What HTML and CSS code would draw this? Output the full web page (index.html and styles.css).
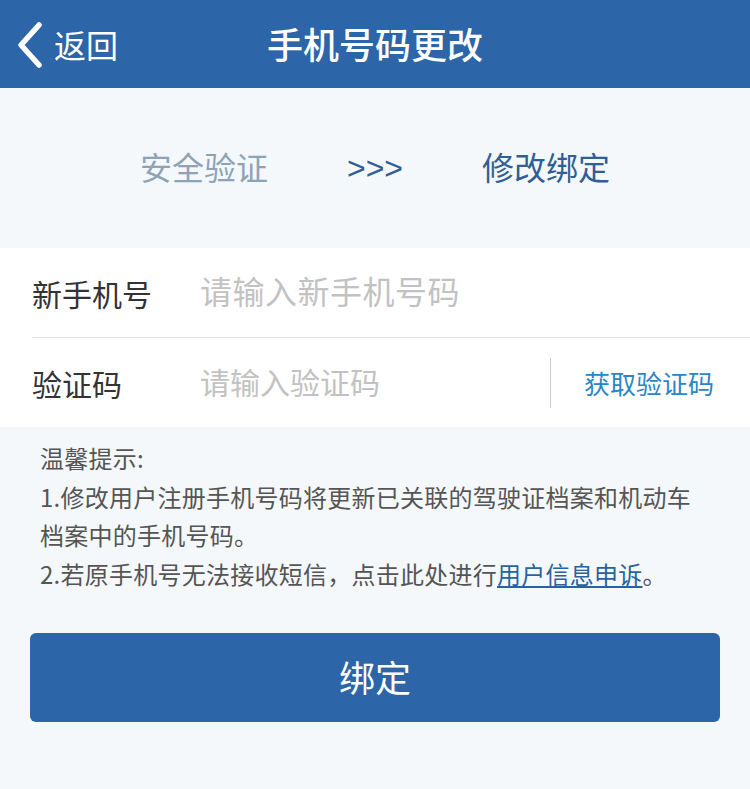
FILE: index.html
```html
<!DOCTYPE html>
<html lang="zh-CN">
<head>
<meta charset="utf-8">
<title>手机号码更改</title>
<link rel="stylesheet" href="styles.css">
</head>
<body>
<div class="page">
  <header class="topbar">
    <a class="back">
      <svg class="chev" width="30" height="48" viewBox="0 0 30 48">
        <path d="M24 4 L6 24 L24 44" fill="none" stroke="#fff" stroke-width="5.5" stroke-linecap="round" stroke-linejoin="round"/>
      </svg>
      <span class="back-text">返回</span>
    </a>
    <h1 class="title">手机号码更改</h1>
  </header>

  <section class="steps">
    <span class="step step-done">安全验证</span>
    <span class="step-arrow">&gt;&gt;&gt;</span>
    <span class="step step-current">修改绑定</span>
  </section>

  <section class="form">
    <div class="row row-phone">
      <span class="label">新手机号</span>
      <span class="placeholder ph-phone">请输入新手机号码</span>
    </div>
    <div class="row row-code">
      <span class="label">验证码</span>
      <span class="placeholder ph-code">请输入验证码</span>
      <span class="divider"></span>
      <span class="get-code">获取验证码</span>
    </div>
  </section>

  <section class="tips">
    <p>温馨提示:</p>
    <p>1.修改用户注册手机号码将更新已关联的驾驶证档案和机动车档案中的手机号码。</p>
    <p>2.若原手机号无法接收短信，点击此处进行<a class="link">用户信息申诉</a>。</p>
  </section>

  <div class="btn-wrap">
    <button class="btn">绑定</button>
  </div>
</div>
</body>
</html>
```
FILE: styles.css
```css
* { box-sizing: border-box; }
html, body {
  margin: 0;
  padding: 0;
  background: #f5f8fa;
  font-family: "Noto Sans CJK SC", "Noto Sans", sans-serif;
}
.page {
  width: 750px;
  min-height: 789px;
  background: #f5f8fa;
}
.topbar {
  height: 88px;
  background: #2d65a9;
  display: flex;
  align-items: center;
  position: relative;
}
.back {
  display: flex;
  align-items: center;
  padding-left: 15px;
  color: #fff;
}
.chev { display: block; margin-top: 2px; }
.back-text {
  font-size: 32px;
  line-height: 40px;
  margin-left: 9px;
  color: #fff;
}
.title {
  position: absolute;
  left: 0;
  right: 0;
  top: 0;
  margin: 0;
  text-align: center;
  font-size: 36px;
  line-height: 86px;
  font-weight: 500;
  color: #fff;
  pointer-events: none;
}
.steps {
  height: 160px;
  display: flex;
  align-items: center;
  justify-content: center;
  gap: 79px;
}
.step {
  font-size: 32px;
  line-height: 40px;
  margin-top: -4px;
}
.step-done { color: #8ea4b6; }
.step-current { color: #2f5f96; }
.step-arrow {
  font-family: "Liberation Sans", Arial, sans-serif;
  font-size: 32px;
  line-height: 40px;
  color: #2f5f96;
}
.form {
  background: #fff;
}
.row {
  display: flex;
  align-items: center;
  height: 89px;
  margin-left: 32px;
}
.row-phone {
  border-bottom: 1px solid #e3e3e3;
  height: 90px;
}
.label {
  width: 168px;
  font-size: 30px;
  line-height: 40px;
  color: #333;
  flex-shrink: 0;
}
.placeholder {
  color: #c2c2c2;
  line-height: 40px;
}
.ph-phone { font-size: 32px; margin-top: -6px; letter-spacing: 0.5px; }
.ph-code { font-size: 30px; flex: 1; margin-top: -4px; }
.divider {
  width: 1px;
  height: 50px;
  background: #c9c9c9;
  margin-right: 33px;
}
.get-code {
  font-size: 26px;
  line-height: 36px;
  color: #2b86c5;
  margin-right: 36px;
}
.tips {
  padding: 12px 48px 0 40px;
  font-size: 24px;
  line-height: 38.5px;
  letter-spacing: 0.25px;
  color: #555;
}
.tips p { margin: 0; }
.link {
  color: #2a62a0;
  text-decoration: underline;
}
.btn-wrap {
  padding: 40px 30px 0 30px;
}
.btn {
  display: block;
  width: 100%;
  height: 89px;
  border: none;
  border-radius: 6px;
  background: #2d65a9;
  color: #fff;
  font-family: "Noto Sans CJK SC", "Noto Sans", sans-serif;
  font-size: 36px;
  line-height: 40px;
  padding: 0 0 4px 0;
}
```
